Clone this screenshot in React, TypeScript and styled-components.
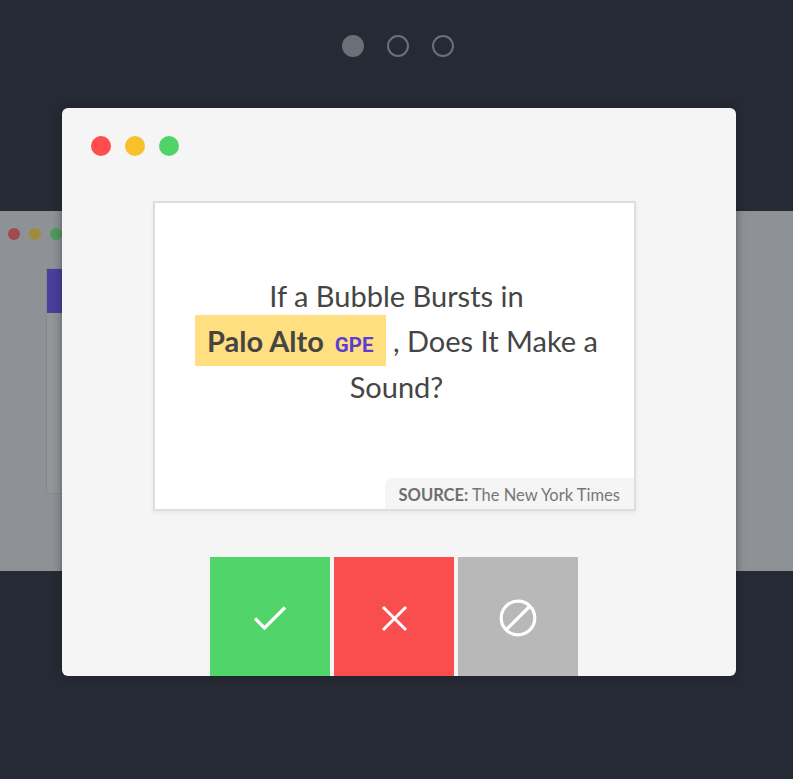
import React from "react";
import styled, { createGlobalStyle } from "styled-components";

const Global = createGlobalStyle`
  html, body { margin: 0; padding: 0; }
  body { background: #252a34; font-family: Lato, "Open Sans", sans-serif; }
`;

const Page = styled.div`
  width: 793px;
  height: 779px;
  background: #252a34;
  overflow: hidden;
  display: flex;
  flex-direction: column;
`;

const Pager = styled.div`
  display: flex;
  justify-content: center;
  gap: 23px;
  padding: 35px 0 0 3px;
  height: 22px;
`;

const PageDot = styled.span<{ $active?: boolean }>`
  box-sizing: border-box;
  width: 22px;
  height: 22px;
  border-radius: 50%;
  background: ${(p) => (p.$active ? "#6c6f77" : "transparent")};
  border: ${(p) => (p.$active ? "none" : "2.5px solid #6c6f77")};
`;

const Stage = styled.div`
  margin-top: 51px;
  display: grid;
`;

const BackWindow = styled.div`
  grid-area: 1 / 1;
  margin-top: 103px;
  height: 360px;
  background: #8e9196;
  display: flex;
  flex-direction: column;
`;

const BackLights = styled.div`
  display: flex;
  gap: 9px;
  padding: 17px 0 0 8px;
`;

const BackLight = styled.span<{ $c: string }>`
  width: 12px;
  height: 12px;
  border-radius: 50%;
  background: ${(p) => p.$c};
`;

const BackCard = styled.div`
  margin: 28px 0 0 46px;
  width: 300px;
  height: 226px;
  background: #939599;
  border: 1px solid #85888d;
  box-sizing: border-box;
`;

const BackBar = styled.div`
  height: 44px;
  width: 200px;
  background: #4a3f9c;
`;

const Modal = styled.div`
  grid-area: 1 / 1;
  margin-left: 62px;
  width: 674px;
  height: 568px;
  background: #f5f5f5;
  border-radius: 6px;
  overflow: hidden;
  box-shadow: 0 0 10px rgba(20, 22, 28, 0.45);
  display: flex;
  flex-direction: column;
  z-index: 1;
`;

const Lights = styled.div`
  display: flex;
  gap: 14px;
  padding: 28px 0 0 29px;
`;

const Light = styled.span<{ $c: string }>`
  width: 20px;
  height: 20px;
  border-radius: 50%;
  background: ${(p) => p.$c};
`;

const Content = styled.div`
  display: flex;
  flex-direction: column;
  align-items: center;
  padding: 45px 10px 0 0;
`;

const Card = styled.div`
  position: relative;
  box-sizing: border-box;
  width: 483px;
  height: 310px;
  background: #fff;
  border: 2px solid #dedede;
  box-shadow: 0 2px 4px rgba(0, 0, 0, 0.06);
  display: flex;
  align-items: center;
  justify-content: center;
  padding: 0 27px 30px 32px;
`;

const Headline = styled.p`
  margin: 0;
  font-family: Lato, sans-serif;
  font-size: 29px;
  line-height: 45.5px;
  color: #454545;
  text-align: center;
`;

const Entity = styled.mark`
  background: #ffdf80;
  color: #454545;
  font-weight: 700;
  padding: 8px 12px;
  white-space: nowrap;
`;

const Label = styled.span`
  font-family: Roboto, sans-serif;
  font-weight: 700;
  font-size: 20.5px;
  line-height: 1;
  color: #5a3fd4;
  margin-left: 11px;
`;

const Source = styled.div`
  position: absolute;
  right: 0;
  bottom: 0;
  width: 249px;
  height: 31px;
  box-sizing: border-box;
  background: #f5f5f5;
  border-top-left-radius: 8px;
  font-family: Lato, sans-serif;
  font-size: 16.5px;
  line-height: 29px;
  color: #777;
  padding: 3px 0 0 14px;
  white-space: nowrap;
`;

const SourceKey = styled.b`
  font-weight: 700;
  color: #6e6e6e;
`;

const Buttons = styled.div`
  display: flex;
  gap: 4px;
  margin-top: 46px;
`;

const ActionButton = styled.button<{ $bg: string }>`
  width: 120px;
  height: 122px;
  border: none;
  padding: 0;
  background: ${(p) => p.$bg};
  display: flex;
  align-items: center;
  justify-content: center;
  cursor: pointer;
`;

const Check = () => (
  <svg width="34" height="26" viewBox="0 0 34 26">
    <path d="M2 13.5 L11.5 23 L32 2.5" fill="none" stroke="#fff" strokeWidth="3.2" />
  </svg>
);

const Cross = () => (
  <svg width="27" height="27" viewBox="0 0 27 27">
    <path d="M2 2 L25 25 M25 2 L2 25" fill="none" stroke="#fff" strokeWidth="3" />
  </svg>
);

const Ban = () => (
  <svg width="40" height="40" viewBox="0 0 40 40">
    <circle cx="20" cy="20" r="16.8" fill="none" stroke="#fff" strokeWidth="3.2" />
    <path d="M8.5 31.5 L31.5 8.5" stroke="#fff" strokeWidth="3.2" />
  </svg>
);

export default function App() {
  return (
    <Page>
      <Global />
      <Pager>
        <PageDot $active />
        <PageDot />
        <PageDot />
      </Pager>
      <Stage>
        <BackWindow>
          <BackLights>
            <BackLight $c="#a24a50" />
            <BackLight $c="#9f8a3e" />
            <BackLight $c="#4f9a5d" />
          </BackLights>
          <BackCard>
            <BackBar />
          </BackCard>
        </BackWindow>
        <Modal>
          <Lights>
            <Light $c="#ff4d4d" />
            <Light $c="#f8c02a" />
            <Light $c="#50d46a" />
          </Lights>
          <Content>
            <Card>
              <Headline>
                If a Bubble Bursts in <Entity>Palo Alto<Label>GPE</Label></Entity> , Does It Make a Sound?
              </Headline>
              <Source>
                <SourceKey>SOURCE:</SourceKey> The New York Times
              </Source>
            </Card>
            <Buttons>
              <ActionButton $bg="#51d46a" aria-label="Accept"><Check /></ActionButton>
              <ActionButton $bg="#fa4e4e" aria-label="Reject"><Cross /></ActionButton>
              <ActionButton $bg="#b8b8b8" aria-label="Ignore"><Ban /></ActionButton>
            </Buttons>
          </Content>
        </Modal>
      </Stage>
    </Page>
  );
}
